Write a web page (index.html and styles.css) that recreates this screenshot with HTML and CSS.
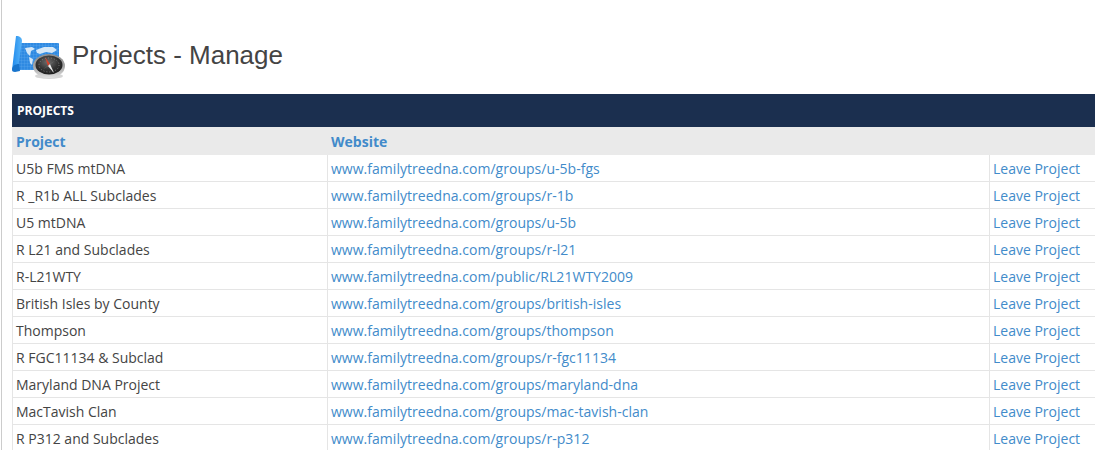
FILE: index.html
```html
<!DOCTYPE html>
<html lang="en">
<head>
<meta charset="utf-8">
<title>Projects - Manage</title>
<link rel="stylesheet" href="styles.css">
</head>
<body>
<div class="page">
  <header class="page-head">
    <svg class="logo" width="54" height="44" viewBox="0 0 54 44" aria-hidden="true">
      <defs>
        <radialGradient id="dial" cx="45%" cy="35%" r="70%"><stop offset="0" stop-color="#6e6e6e"/><stop offset="0.55" stop-color="#333"/><stop offset="1" stop-color="#1a1a1a"/></radialGradient>
        <linearGradient id="rim" x1="0" y1="0" x2="0" y2="1"><stop offset="0" stop-color="#8c8c8c"/><stop offset="0.55" stop-color="#a8a8a8"/><stop offset="1" stop-color="#e0e0e0"/></linearGradient>
        <linearGradient id="roll" x1="0" y1="0" x2="1" y2="0"><stop offset="0" stop-color="#1f8aec"/><stop offset="1" stop-color="#58b4f8"/></linearGradient>
        <pattern id="grid" width="3" height="3" patternUnits="userSpaceOnUse"><path d="M3 0H0V3" fill="none" stroke="#66aef0" stroke-width=".5"/></pattern>
      </defs>
      <path d="M8 7 H46 Q47 7 47 8 V34 H4 Z" fill="#2f8ae2"/>
      <path d="M8 7 H46 Q47 7 47 8 V34 H4 Z" fill="url(#grid)"/>
      <path d="M13 12 L20 11 L23 13 L19 15 L18 20 L15 17 Z M24 14 L32 11 H41 L45 14 L40 17 L34 16 L28 18 L25 17 Z M17 21 L21 23 L20 29 L18 27 Z" fill="#d5e8f8"/>
      <path d="M4 0 C8 0 10 2 10 5 L7 26 C6 30 4 31 2 33 L0 34 Z" fill="url(#roll)"/>
      <path d="M0 34 C0 30 3 28 7 28 L8 35 L3 36 C1 36 0 35 0 34 Z" fill="#1874cc"/>
      <ellipse cx="37" cy="40" rx="14" ry="3" fill="#999" opacity=".4"/>
      <ellipse cx="37" cy="30" rx="16" ry="12" fill="url(#rim)"/>
      <ellipse cx="37" cy="29" rx="13.5" ry="9.5" fill="url(#dial)"/>
      <ellipse cx="37" cy="29" rx="10" ry="7" fill="none" stroke="#aaa" stroke-width=".6" stroke-dasharray="1 2"/>
      <path d="M33 21 L38 28 L36 30 Z" fill="#d8402a"/>
      <path d="M36 30 L38 28 L42 37 Z" fill="#eee"/>
      <path d="M44 24 L38 28 L36 30 L30 34 Z" fill="#bbb" opacity=".7"/>
    </svg>
    <h1 class="title">Projects - Manage</h1>
  </header>
  <section class="panel">
    <div class="panel-title">PROJECTS</div>
    <table class="projects">
      <colgroup><col class="col-project"><col class="col-site"><col class="col-action"></colgroup>
      <thead>
        <tr><th>Project</th><th>Website</th><th></th></tr>
      </thead>
      <tbody>
        <tr><td>U5b FMS mtDNA</td><td><a class="site" href="#">www.familytreedna.com/groups/u-5b-fgs</a></td><td><a href="#">Leave Project</a></td></tr>
        <tr><td>R _R1b ALL Subclades</td><td><a class="site" href="#">www.familytreedna.com/groups/r-1b</a></td><td><a href="#">Leave Project</a></td></tr>
        <tr><td>U5 mtDNA</td><td><a class="site" href="#">www.familytreedna.com/groups/u-5b</a></td><td><a href="#">Leave Project</a></td></tr>
        <tr><td>R L21 and Subclades</td><td><a class="site" href="#">www.familytreedna.com/groups/r-l21</a></td><td><a href="#">Leave Project</a></td></tr>
        <tr><td>R-L21WTY</td><td><a class="site" href="#">www.familytreedna.com/public/RL21WTY2009</a></td><td><a href="#">Leave Project</a></td></tr>
        <tr><td>British Isles by County</td><td><a class="site" href="#">www.familytreedna.com/groups/british-isles</a></td><td><a href="#">Leave Project</a></td></tr>
        <tr><td>Thompson</td><td><a class="site" href="#">www.familytreedna.com/groups/thompson</a></td><td><a href="#">Leave Project</a></td></tr>
        <tr><td>R FGC11134 &amp; Subclad</td><td><a class="site" href="#">www.familytreedna.com/groups/r-fgc11134</a></td><td><a href="#">Leave Project</a></td></tr>
        <tr><td>Maryland DNA Project</td><td><a class="site" href="#">www.familytreedna.com/groups/maryland-dna</a></td><td><a href="#">Leave Project</a></td></tr>
        <tr><td>MacTavish Clan</td><td><a class="site" href="#">www.familytreedna.com/groups/mac-tavish-clan</a></td><td><a href="#">Leave Project</a></td></tr>
        <tr><td>R P312 and Subclades</td><td><a class="site" href="#">www.familytreedna.com/groups/r-p312</a></td><td><a href="#">Leave Project</a></td></tr>
      </tbody>
    </table>
  </section>
</div>
</body>
</html>
```
FILE: styles.css
```css
html, body {
  margin: 0;
  padding: 0;
  height: 100%;
  overflow: hidden;
  background: #fff;
}
body {
  font-family: "Open Sans", sans-serif;
  font-size: 14px;
  color: #444;
}
.page {
  margin-left: 1px;
  border-left: 1px solid #ccc;
  padding: 36px 0 0 10px;
  width: 1200px;
  height: 600px;
}
.page-head {
  display: flex;
  align-items: flex-start;
  gap: 6px;
  height: 58px;
}
.logo {
  display: block;
  flex: none;
  filter: blur(0.4px);
}
.title {
  margin: 1px 0 0;
  font-family: "Liberation Sans", Arial, sans-serif;
  font-size: 26px;
  font-weight: 400;
  line-height: 36px;
  color: #444;
}
.panel-title {
  height: 33px;
  line-height: 33px;
  padding-left: 5px;
  background: #1b2f4f;
  color: #fff;
  font-size: 12px;
  font-weight: 700;
}
.projects {
  border-collapse: collapse;
  table-layout: fixed;
  width: 1188px;
}
.col-project { width: 315px; }
.col-site { width: 662px; }
.col-action { width: 211px; }
.projects th {
  height: 28px;
  padding: 0 3px;
  border-left: 1px solid #eaeaea;
  background: #eaeaea;
  color: #428bca;
  font-weight: 700;
  font-size: 14px;
  text-align: left;
}
.projects td {
  height: 26px;
  padding: 0 3px;
  border-bottom: 1px solid #e5e5e5;
  border-left: 1px solid #e5e5e5;
  white-space: nowrap;
}
.projects a {
  color: #428bca;
  text-decoration: none;
}
.projects .site {
  letter-spacing: 0.025px;
}
```
